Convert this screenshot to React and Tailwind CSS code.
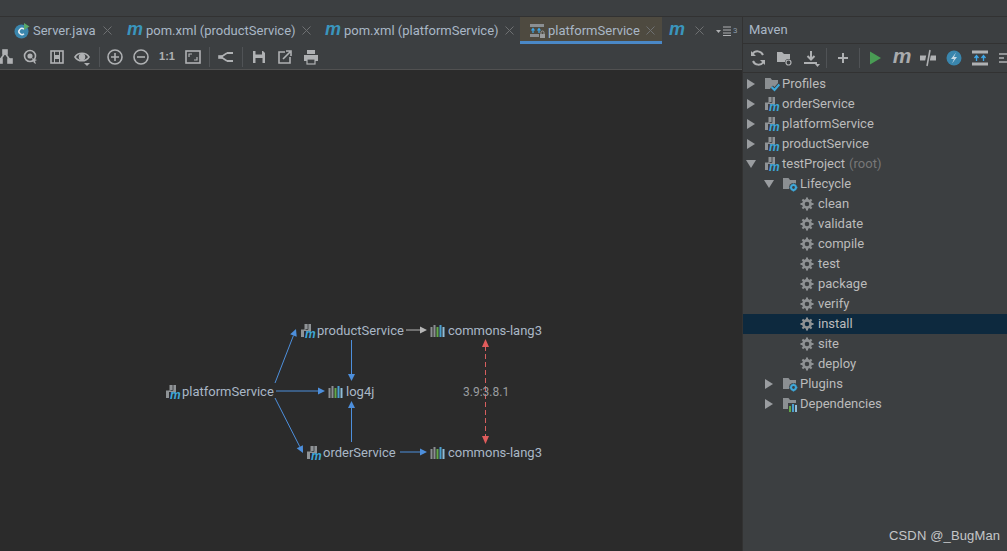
import React from 'react';

const GRAY = '#afb1b3';

function ModuleIcon({ bg = 'bg-[#3c3f41]' }) {
  return (
    <div className="relative w-[16px] h-[16px] shrink-0">
      <svg width="16" height="16" viewBox="0 0 16 16">
        <path d="M1 6.500h3.500V1H11v13H1z" fill="#8f9396" />
        <path d="M5.500 6.500h2.500V1" fill="none" stroke="#3c3f41" strokeWidth="0.9" />
      </svg>
      <div className={`absolute left-[4px] top-[8px] w-[9px] h-[7px] ${bg}`} />
      <span className="absolute left-[5px] top-[5px] text-[12px] leading-[12px] font-bold italic text-[#3ea7d8] font-['Liberation_Sans',sans-serif]">m</span>
    </div>
  );
}

function BarsIcon() {
  return (
    <svg width="15" height="14" viewBox="0 0 15 14" className="shrink-0">
      <rect x="0.500" y="3" width="2" height="10" fill="#8b8f92" />
      <rect x="3.500" y="1" width="2" height="12" fill="#8b8f92" />
      <rect x="6.500" y="3" width="2" height="10" fill="#62a84a" />
      <rect x="9.500" y="1" width="2" height="12" fill="#4a9fd0" />
      <rect x="12.500" y="3" width="2" height="10" fill="#8fbcd6" />
    </svg>
  );
}

function Gear({ color = '#8e9193', size = 14 }) {
  return (
    <svg width={size} height={size} viewBox="0 0 14 14" className="shrink-0 mr-[2px]">
      <circle cx="7" cy="7" r="3.600" fill="none" stroke={color} strokeWidth="2.600" />
      <path d="M7 .5v13M.5 7h13M2.400 2.400l9.200 9.200M11.600 2.400l-9.200 9.200" stroke={color} strokeWidth="2.100" strokeDasharray="2.600 7.800 2.600" fill="none" />
    </svg>
  );
}

function FolderIcon({ badge }) {
  return (
    <svg width="16" height="16" viewBox="0 0 16 16" className="shrink-0">
      <path d="M1 2h5.500L8 4h6v9H1z" fill="#8b8f92" />
      {badge === 'check' && (
        <g>
          <path d="M7.500 11l3 3 4.800-5.500" fill="none" stroke="#3c3f41" strokeWidth="4" />
          <path d="M7.500 11l3 3 4.800-5.500" fill="none" stroke="#3ea7d8" strokeWidth="2.200" />
        </g>
      )}
      {badge === 'gear' && (
        <g>
          <circle cx="11.500" cy="11.500" r="4.500" fill="#3c3f41" />
          <circle cx="11.500" cy="11.500" r="2.400" fill="none" stroke="#3ea7d8" strokeWidth="2" />
          <path d="M11.500 7.600v7.800M7.600 11.500h7.800" stroke="#3ea7d8" strokeWidth="1.400" strokeDasharray="1.400 5 1.400" fill="none" />
        </g>
      )}
      {badge === 'bars' && (
        <g>
          <rect x="6" y="7" width="10" height="9" fill="#3c3f41" />
          <rect x="7" y="10" width="2" height="6" fill="#62a84a" />
          <rect x="10" y="8" width="2" height="8" fill="#4a9fd0" />
          <rect x="13" y="9" width="2" height="7" fill="#8fbcd6" />
        </g>
      )}
    </svg>
  );
}

function ToolIcon({ children, className = 'w-[26px]' }) {
  return (
    <div className={`flex items-center justify-center shrink-0 ${className}`}>
      <svg width="18" height="18" viewBox="0 0 18 18" fill="none" stroke={GRAY} strokeWidth="1.600">
        {children}
      </svg>
    </div>
  );
}

function Sep({ className }) {
  return (
    <div className={`flex justify-center shrink-0 ${className}`}>
      <div className="w-px h-[20px] bg-[#505356]" />
    </div>
  );
}

function MavenM({ className = '' }) {
  return (
    <span className={`font-bold italic text-[18px] leading-none -mt-[4px] text-[#3a95bd] shrink-0 font-['Liberation_Sans',sans-serif] ${className}`}>m</span>
  );
}

function CloseX({ className = '' }) {
  return (
    <svg width="9" height="9" viewBox="0 0 9 9" className={`shrink-0 ${className}`}>
      <path d="M.5.5l8 8M8.500.5l-8 8" stroke="#6e7072" strokeWidth="1" />
    </svg>
  );
}

function DiagramIcon() {
  return (
    <svg width="16" height="16" viewBox="0 0 16 16" className="shrink-0">
      <rect x="1" y="1" width="14" height="3" fill="#8b8f92" />
      <rect x="1" y="11" width="9" height="3" fill="#8b8f92" />
      <path d="M4 10V6M2.500 7.500L4 5.500l1.500 2M10 10V6M8.500 7.500l1.500-2 1.500 2" stroke="#3ea7e8" strokeWidth="1.200" fill="none" />
      <rect x="11" y="11" width="5" height="4" fill="#9a9c9e" />
      <path d="M12 11V9.500a1.500 1.500 0 013 0V11" stroke="#9a9c9e" fill="none" />
    </svg>
  );
}

function Tabs() {
  return (
    <div className="h-[27px] flex items-stretch text-[13px] text-[#a9b7c6] whitespace-nowrap shrink-0">
      <div className="flex items-center pl-[14px] w-[120px]">
        <svg width="16" height="16" viewBox="0 0 16 16" className="shrink-0">
          <circle cx="7.500" cy="8.500" r="7" fill="#3a86ad" />
          <path d="M10 6.300a3 3 0 100 4.400" fill="none" stroke="#e8eef2" strokeWidth="1.500" />
          <path d="M10 0l5.500 3.500L10 7z" fill="#59a869" />
        </svg>
        <span className="ml-[3px] flex-1">Server.java</span>
        <CloseX className="mr-[8px]" />
      </div>
      <div className="flex items-center pl-[7px] w-[199px]">
        <MavenM className="w-[19px]" />
        <span className="flex-1">pom.xml (productService)</span>
        <CloseX className="mr-[8px]" />
      </div>
      <div className="flex items-center pl-[6px] w-[201px]">
        <MavenM className="w-[19px]" />
        <span className="flex-1">pom.xml (platformService)</span>
        <CloseX className="mr-[6px]" />
      </div>
      <div className="w-[142px] flex items-center pl-[9px] pt-[3px] bg-[#4e4a40] border-b-[3px] border-[#4a88c7]">
        <DiagramIcon />
        <span className="ml-[3px] flex-1">platformService</span>
        <CloseX className="mr-[7px]" />
      </div>
      <div className="flex items-center pl-[7px]">
        <MavenM className="w-[26px]" />
        <CloseX />
      </div>
      <div className="flex items-center ml-[12px] gap-[1px]">
        <svg width="16" height="10" viewBox="0 0 16 10">
          <path d="M0 4h5L2.500 7z" fill={GRAY} />
          <path d="M7 1h8M7 4h8M7 7h8M7 9.500h8" stroke={GRAY} strokeWidth="1" />
        </svg>
        <span className="text-[8px] text-[#8a9aa8]">3</span>
      </div>
    </div>
  );
}

function DiagramToolbar() {
  return (
    <div className="h-[25px] flex items-center -ml-[8px] shrink-0">
      <ToolIcon><path d="M9 5L4 12M9 5l5 7" /><rect x="7" y="2" width="4" height="4" fill={GRAY} /><rect x="2" y="11" width="4" height="4" fill={GRAY} /><rect x="12" y="11" width="4" height="4" fill={GRAY} /></ToolIcon>
      <ToolIcon><circle cx="8" cy="8" r="5.500" /><circle cx="8" cy="8" r="1.800" fill={GRAY} /><path d="M10 10l5 2-2 1 1 3-2-1-1-2z" fill={GRAY} stroke="none" /></ToolIcon>
      <ToolIcon><rect x="3" y="3" width="12" height="12" /><path d="M6.500 3v12M11.500 3v12" strokeWidth="1" /><rect x="7" y="7" width="4" height="4" fill={GRAY} stroke="none" /></ToolIcon>
      <ToolIcon className="w-[26px]"><path d="M1 9c3-5 11-5 14 0-3 5-11 5-14 0z" /><circle cx="8" cy="9" r="2.500" fill={GRAY} /><path d="M10 15h6l-3 3z" fill={GRAY} stroke="none" /></ToolIcon>
      <Sep className="w-[6px]" />
      <ToolIcon><circle cx="9" cy="9" r="7" /><path d="M5 9h8M9 5v8" /></ToolIcon>
      <ToolIcon><circle cx="9" cy="9" r="7" /><path d="M5 9h8" /></ToolIcon>
      <div className="w-[26px] flex justify-center shrink-0 text-[11px] font-bold text-[#afb1b3] font-['Liberation_Sans',sans-serif]">1:1</div>
      <ToolIcon><rect x="2" y="3" width="14" height="12" /><path d="M5 9V6h3M13 9v3h-3" strokeWidth="1.200" /></ToolIcon>
      <Sep className="w-[7px]" />
      <ToolIcon><path d="M10 5L4 9l6 4" /><path d="M10 5h6M10 13h6" strokeWidth="2" /><rect x="2" y="8" width="3" height="2" fill={GRAY} /></ToolIcon>
      <Sep className="w-[7px]" />
      <ToolIcon><path d="M3 3h10l2 2v10H3z" fill={GRAY} stroke="none" /><rect x="5.500" y="3" width="6.500" height="3.500" fill="#3c3f41" stroke="none" /><rect x="5.500" y="10" width="7" height="5" fill="#3c3f41" stroke="none" /></ToolIcon>
      <ToolIcon><path d="M9 4H3v11h11v-6" /><path d="M7 11l7-7M10 3h5v5" /></ToolIcon>
      <ToolIcon><rect x="5" y="2" width="8" height="4" fill={GRAY} stroke="none" /><rect x="2" y="7" width="14" height="6" fill={GRAY} stroke="none" /><rect x="5" y="11" width="8" height="5" fill="#3c3f41" strokeWidth="1.200" /></ToolIcon>
    </div>
  );
}

function Arrow({ x1, y1, x2, y2, color = '#4d8fdc' }) {
  const a = Math.atan2(y2 - y1, x2 - x1);
  const s = 7;
  const w = 3.500;
  const bx = x2 - Math.cos(a) * s;
  const by = y2 - Math.sin(a) * s;
  const px = -Math.sin(a) * w;
  const py = Math.cos(a) * w;
  return (
    <g>
      <line x1={x1} y1={y1} x2={bx} y2={by} stroke={color} strokeWidth="1" />
      <polygon points={`${x2},${y2} ${bx + px},${by + py} ${bx - px},${by - py}`} fill={color} />
    </g>
  );
}

function Node({ icon, label, className }) {
  return (
    <div className={`absolute flex items-center h-[18px] text-[13px] text-[#a9b7c6] whitespace-nowrap ${className}`}>
      {icon}
      <span>{label}</span>
    </div>
  );
}

function Graph() {
  return (
    <div className="relative flex-1 bg-[#2b2b2b] overflow-hidden">
      <svg width="743" height="481" viewBox="0 70 743 481" className="absolute left-0 top-0">
        <Arrow x1={275} y1={383} x2={296} y2={329} />
        <Arrow x1={276} y1={391} x2={325} y2={391} />
        <Arrow x1={275} y1={398} x2={303} y2={453} />
        <Arrow x1={351.500} y1={340} x2={351.500} y2={381} />
        <Arrow x1={351.500} y1={442} x2={351.500} y2={401} />
        <Arrow x1={406} y1={330} x2={427} y2={330} color="#b5b5b5" />
        <Arrow x1={400} y1={452} x2={427} y2={452} />
        <line x1={485.500} y1={346} x2={485.500} y2={438} stroke="#d75f5f" strokeDasharray="5 3" />
        <polygon points="485.500,339 482,347 489,347" fill="#e05c5c" />
        <polygon points="485.500,444 482,436 489,436" fill="#e05c5c" />
      </svg>
      <Node className="left-[165px] top-[313px] gap-[1px]" icon={<ModuleIcon bg="bg-[#2b2b2b]" />} label="platformService" />
      <Node className="left-[300px] top-[252px] gap-[1px]" icon={<ModuleIcon bg="bg-[#2b2b2b]" />} label="productService" />
      <Node className="left-[306px] top-[374px] gap-[1px]" icon={<ModuleIcon bg="bg-[#2b2b2b]" />} label="orderService" />
      <Node className="left-[328px] top-[313px] gap-[3px]" icon={<BarsIcon />} label="log4j" />
      <Node className="left-[430px] top-[252px] gap-[3px]" icon={<BarsIcon />} label="commons-lang3" />
      <Node className="left-[430px] top-[374px] gap-[3px]" icon={<BarsIcon />} label="commons-lang3" />
      <div className="absolute left-[463px] top-[313px] h-[18px] flex items-center text-[12px] text-[#9a9da0]">3.9:3.8.1</div>
    </div>
  );
}

function MavenToolbar() {
  return (
    <div className="h-[29px] flex items-center pl-[2px] pb-[1px] border-b border-[#323232] shrink-0 overflow-hidden">
      <ToolIcon><path d="M14 6a6 6 0 00-10.500-1M4 12a6 6 0 0010.500 1" strokeWidth="2" /><path d="M2 2v5h5zM16 16v-5h-5z" fill={GRAY} stroke="none" /></ToolIcon>
      <ToolIcon><path d="M2 3h5l2 2h6v8H2z" fill={GRAY} stroke="none" /><circle cx="13.500" cy="13.500" r="3" strokeWidth="1.200" stroke="#3c3f41" fill="#3c3f41" /><circle cx="13.500" cy="13.500" r="2.500" strokeWidth="1.200" /></ToolIcon>
      <ToolIcon className="w-[28px]"><path d="M9 2v8M5.500 7L9 10.500 12.500 7" strokeWidth="2" /><path d="M2 14h13" strokeWidth="2" /><path d="M13 15h5l-2.500 3z" fill={GRAY} stroke="none" /></ToolIcon>
      <Sep className="w-[3px]" />
      <ToolIcon className="w-[30px]"><path d="M9 4v10M4 9h10" strokeWidth="2" /></ToolIcon>
      <Sep className="w-[3px]" />
      <ToolIcon className="w-[28px]"><path d="M4 2.500l11 6.500-11 6.500z" fill="#499c54" stroke="none" /></ToolIcon>
      <div className="w-[26px] flex justify-center shrink-0 -mt-[4px]"><span className="font-bold italic text-[21px] leading-none text-[#a9abad] font-['Liberation_Sans',sans-serif]">m</span></div>
      <ToolIcon><path d="M1 9h16" strokeWidth="5" /><path d="M10.500 1L7.500 17" stroke="#3c3f41" strokeWidth="4.500" /><path d="M11 1L8 17" strokeWidth="1.500" /></ToolIcon>
      <ToolIcon><circle cx="9" cy="9" r="7.500" fill="#3a86ad" stroke="none" /><path d="M11 3.500L6 10h3l-2 4.500 5-6.500H9z" fill="#c8dbe6" stroke="none" /></ToolIcon>
      <ToolIcon><rect x="1" y="1.500" width="16" height="3" fill={GRAY} stroke="none" /><rect x="1" y="13.500" width="16" height="3" fill={GRAY} stroke="none" /><path d="M5.500 12V7M3.500 9l2-2.500 2 2.500M12.500 12V7M10.500 9l2-2.500 2 2.500" stroke="#3ea7e8" strokeWidth="1.300" /></ToolIcon>
      <ToolIcon><path d="M2 5h10M2 9h5M2 13h10M11 7l4 2-4 2" strokeWidth="1.500" /></ToolIcon>
    </div>
  );
}

function TreeRow({ pad, arrow, icon, label, suffix, selected }) {
  return (
    <div className={`h-[20px] flex items-center text-[13px] text-[#bbbbbb] ${pad} ${selected ? 'bg-[#0d293e]' : ''}`}>
      {arrow === 'right' && (
        <svg width="10" height="10" viewBox="0 0 10 10" className="shrink-0"><path d="M1 0l8 5-8 5z" fill="#9a9da0" /></svg>
      )}
      {arrow === 'down' && (
        <svg width="10" height="10" viewBox="0 0 10 10" className="shrink-0"><path d="M0 1h10L5 9z" fill="#9a9da0" /></svg>
      )}
      {arrow && <div className="w-[8px] shrink-0" />}
      {icon}
      <span className="ml-[2px]">{label}</span>
      {suffix && <span className="ml-[4px] text-[#787878]">{suffix}</span>}
    </div>
  );
}

const lifecycle = ['clean', 'validate', 'compile', 'test', 'package', 'verify', 'install', 'site', 'deploy'];

function MavenPanel() {
  return (
    <div className="w-[264px] flex flex-col shrink-0">
      <div className="h-[27px] flex items-center pl-[6px] text-[13px] text-[#a9b7c6] border-b border-[#323232] shrink-0">Maven</div>
      <MavenToolbar />
      <div className="flex-1 pt-[1px]">
        <TreeRow pad="pl-[3px]" arrow="right" icon={<FolderIcon badge="check" />} label="Profiles" />
        <TreeRow pad="pl-[3px]" arrow="right" icon={<ModuleIcon />} label="orderService" />
        <TreeRow pad="pl-[3px]" arrow="right" icon={<ModuleIcon />} label="platformService" />
        <TreeRow pad="pl-[3px]" arrow="right" icon={<ModuleIcon />} label="productService" />
        <TreeRow pad="pl-[3px]" arrow="down" icon={<ModuleIcon />} label="testProject" suffix="(root)" />
        <TreeRow pad="pl-[21px]" arrow="down" icon={<FolderIcon badge="gear" />} label="Lifecycle" />
        {lifecycle.map((name) => (
          <TreeRow key={name} pad="pl-[57px]" icon={<Gear />} label={name} selected={name === 'install'} />
        ))}
        <TreeRow pad="pl-[21px]" arrow="right" icon={<FolderIcon badge="gear" />} label="Plugins" />
        <TreeRow pad="pl-[21px]" arrow="right" icon={<FolderIcon badge="bars" />} label="Dependencies" />
      </div>
    </div>
  );
}

export default function App() {
  return (
    <div className="relative w-[1007px] h-[551px] overflow-hidden flex flex-col bg-[#3c3f41] font-['Roboto',sans-serif]">
      <div className="h-[17px] border-b border-[#323232] shrink-0" />
      <div className="flex flex-1 min-h-0">
        <div className="w-[743px] flex flex-col border-r border-[#323232] shrink-0">
          <Tabs />
          <DiagramToolbar />
          <div className="h-px bg-[#515151] shrink-0" />
          <Graph />
        </div>
        <MavenPanel />
      </div>
      <div className="absolute left-[889px] top-[526px] text-[13px] tracking-[0.15px] text-[#c4c6c8] font-['Liberation_Sans',sans-serif]">CSDN @_BugMan</div>
    </div>
  );
}
